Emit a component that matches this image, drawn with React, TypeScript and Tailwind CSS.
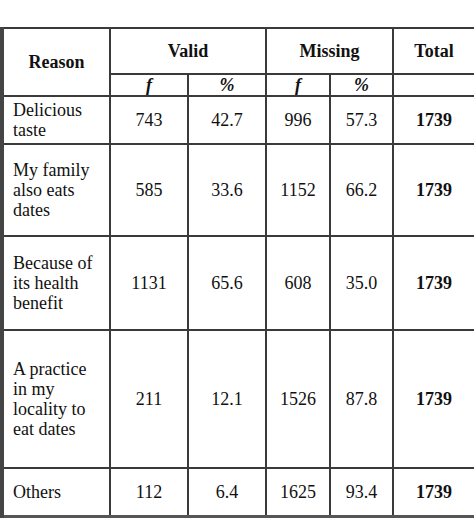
const rows = [
  { reason: ['Delicious', 'taste'], vf: '743', vp: '42.7', mf: '996', mp: '57.3', h: 'h-[48px]' },
  { reason: ['My family', 'also eats', 'dates'], vf: '585', vp: '33.6', mf: '1152', mp: '66.2', h: 'h-[92px]' },
  { reason: ['Because of', 'its health', 'benefit'], vf: '1131', vp: '65.6', mf: '608', mp: '35.0', h: 'h-[94px]' },
  { reason: ['A practice', 'in my', 'locality to', 'eat dates'], vf: '211', vp: '12.1', mf: '1526', mp: '87.8', h: 'h-[138px]' },
  { reason: ['Others'], vf: '112', vp: '6.4', mf: '1625', mp: '93.4', h: 'h-[48px]' },
];

const cell = 'border-2 border-[#3a3a3a] text-center align-middle';

export default function App() {
  return (
    <div
      className="w-[474px] h-[518px] bg-white pt-[27px] text-[#111] overflow-hidden"
      style={{ fontFamily: '"Liberation Serif", "Times New Roman", serif' }}
    >
      <table className="w-[474px] table-fixed border-collapse border-l-[4px] border-r-[4px] border-b-[3px] border-l-[#444] border-r-[#444] border-b-[#555] text-[18px] leading-[20px]">
        <colgroup>
          <col className="w-[108px]" />
          <col className="w-[78px]" />
          <col className="w-[78px]" />
          <col className="w-[64px]" />
          <col className="w-[63px]" />
          <col className="w-[83px]" />
        </colgroup>
        <thead>
          <tr className="h-[46px]">
            <th rowSpan={2} className={`${cell} font-bold`}>Reason</th>
            <th colSpan={2} className={`${cell} font-bold`}>Valid</th>
            <th colSpan={2} className={`${cell} font-bold`}>Missing</th>
            <th className={`${cell} font-bold`}>Total</th>
          </tr>
          <tr className="h-[22px]">
            <th className={`${cell} font-bold italic`}>f</th>
            <th className={`${cell} font-bold italic`}>%</th>
            <th className={`${cell} font-bold italic`}>f</th>
            <th className={`${cell} font-bold italic`}>%</th>
            <th className={cell}></th>
          </tr>
        </thead>
        <tbody>
          {rows.map((r) => (
            <tr key={r.reason.join(' ')} className={r.h}>
              <td className="border-2 border-[#3a3a3a] align-middle pl-[9px] text-left">
                {r.reason.map((line) => (
                  <div key={line}>{line}</div>
                ))}
              </td>
              <td className={cell}>{r.vf}</td>
              <td className={cell}>{r.vp}</td>
              <td className={cell}>{r.mf}</td>
              <td className={cell}>{r.mp}</td>
              <td className={`${cell} font-bold`}>1739</td>
            </tr>
          ))}
        </tbody>
      </table>
    </div>
  );
}
